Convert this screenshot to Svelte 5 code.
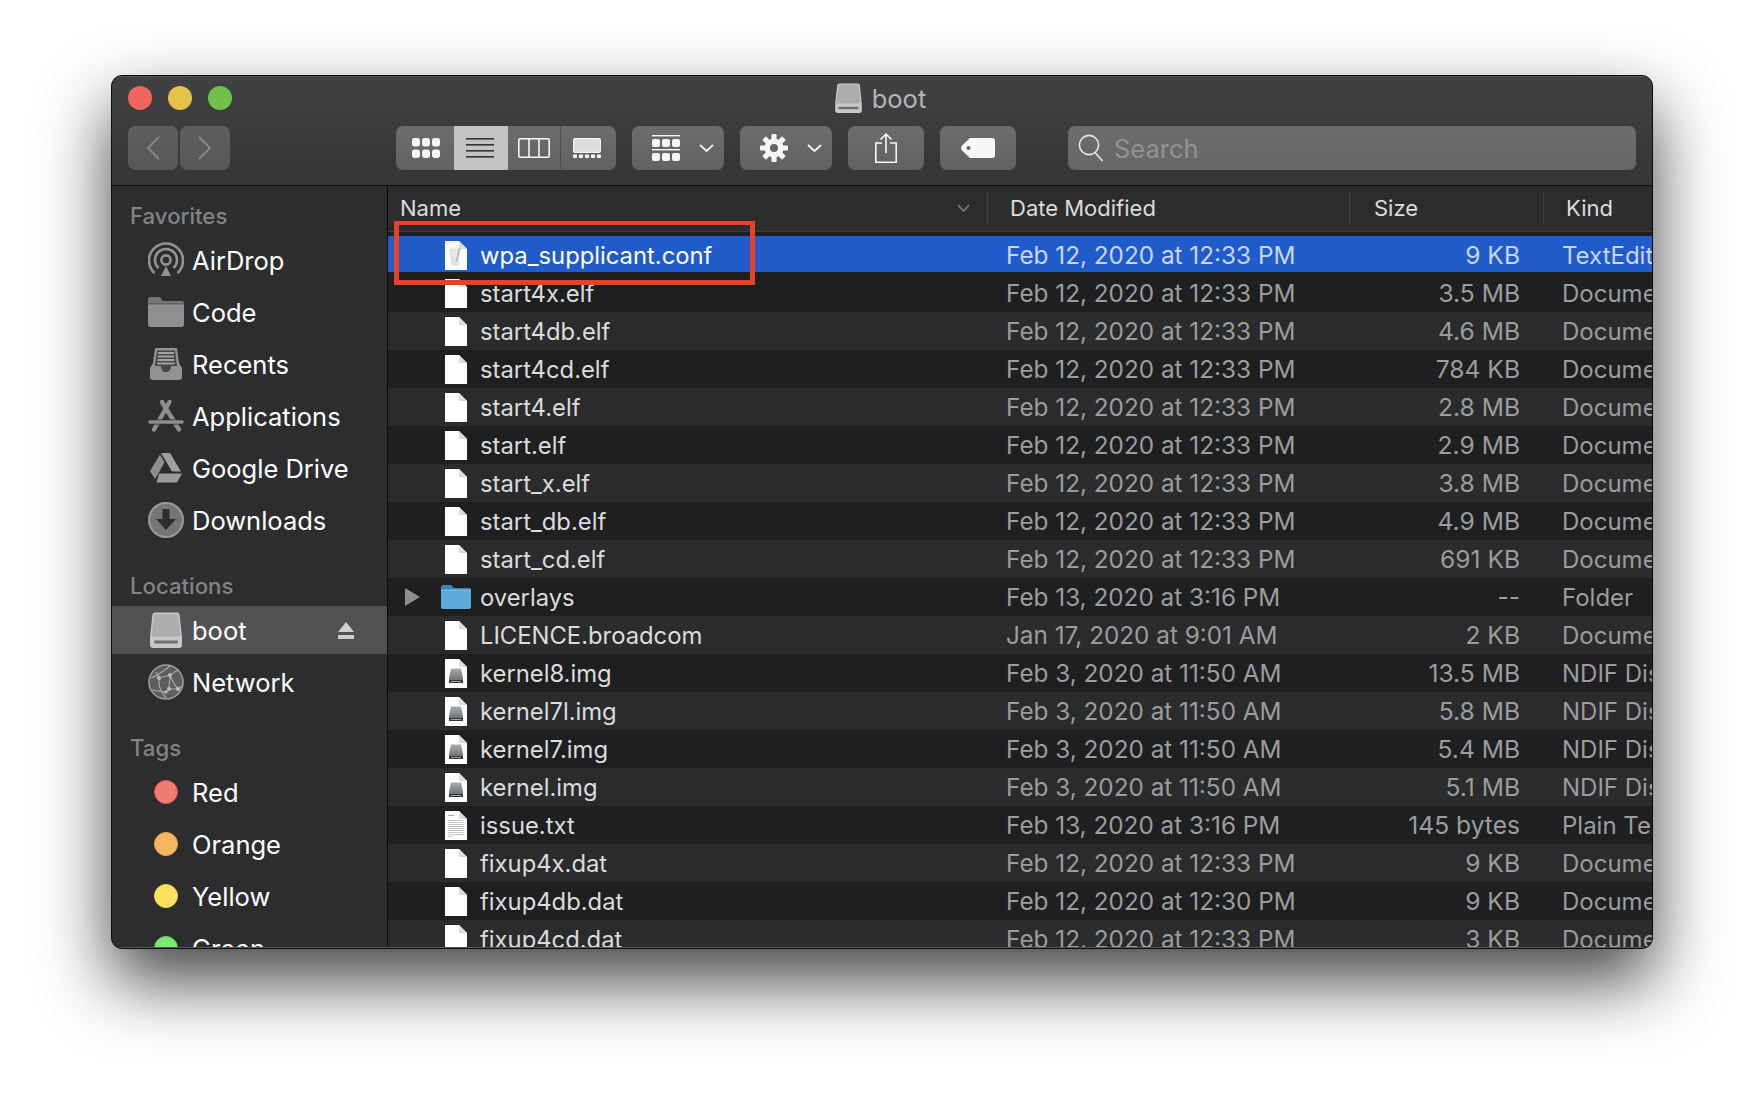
<script>
	const doc = 'Document';
	const disk = 'NDIF Disk Image';
	const feb12 = 'Feb 12, 2020 at 12:33 PM';
	const feb3 = 'Feb 3, 2020 at 11:50 AM';
	const feb13 = 'Feb 13, 2020 at 3:16 PM';

	const files = [
		{ name: 'wpa_supplicant.conf', date: feb12, size: '9 KB', kind: 'TextEdit Document', icon: 'edit', selected: true },
		{ name: 'start4x.elf', date: feb12, size: '3.5 MB', kind: doc, icon: 'file' },
		{ name: 'start4db.elf', date: feb12, size: '4.6 MB', kind: doc, icon: 'file' },
		{ name: 'start4cd.elf', date: feb12, size: '784 KB', kind: doc, icon: 'file' },
		{ name: 'start4.elf', date: feb12, size: '2.8 MB', kind: doc, icon: 'file' },
		{ name: 'start.elf', date: feb12, size: '2.9 MB', kind: doc, icon: 'file' },
		{ name: 'start_x.elf', date: feb12, size: '3.8 MB', kind: doc, icon: 'file' },
		{ name: 'start_db.elf', date: feb12, size: '4.9 MB', kind: doc, icon: 'file' },
		{ name: 'start_cd.elf', date: feb12, size: '691 KB', kind: doc, icon: 'file' },
		{ name: 'overlays', date: feb13, size: '--', kind: 'Folder', icon: 'folder' },
		{ name: 'LICENCE.broadcom', date: 'Jan 17, 2020 at 9:01 AM', size: '2 KB', kind: doc, icon: 'file' },
		{ name: 'kernel8.img', date: feb3, size: '13.5 MB', kind: disk, icon: 'disk' },
		{ name: 'kernel7l.img', date: feb3, size: '5.8 MB', kind: disk, icon: 'disk' },
		{ name: 'kernel7.img', date: feb3, size: '5.4 MB', kind: disk, icon: 'disk' },
		{ name: 'kernel.img', date: feb3, size: '5.1 MB', kind: disk, icon: 'disk' },
		{ name: 'issue.txt', date: feb13, size: '145 bytes', kind: 'Plain Text Document', icon: 'text' },
		{ name: 'fixup4x.dat', date: feb12, size: '9 KB', kind: doc, icon: 'file' },
		{ name: 'fixup4db.dat', date: 'Feb 12, 2020 at 12:30 PM', size: '9 KB', kind: doc, icon: 'file' },
		{ name: 'fixup4cd.dat', date: feb12, size: '3 KB', kind: doc, icon: 'file' }
	];

	const favorites = [
		{ label: 'AirDrop', icon: 'airdrop' },
		{ label: 'Code', icon: 'code' },
		{ label: 'Recents', icon: 'recents' },
		{ label: 'Applications', icon: 'apps' },
		{ label: 'Google Drive', icon: 'drive' },
		{ label: 'Downloads', icon: 'downloads' }
	];

	const tags = [
		{ label: 'Red', fill: '#f17c75', ring: '#e5564d' },
		{ label: 'Orange', fill: '#f5b65f', ring: '#eda43f' },
		{ label: 'Yellow', fill: '#fbe162', ring: '#f5d84a' },
		{ label: 'Green', fill: '#7fe873', ring: '#62d957' }
	];

	const gearTeeth = [0, 45, 90, 135, 180, 225, 270, 315];
	const textLines = [9, 11, 13, 15, 17, 19, 21, 23];
</script>

{#snippet driveIcon()}
	<svg class="drive-icon" width="32" height="36" viewBox="0 0 32 36">
		<path d="M5 0.5H27C28.5 0.5 29.3 1.5 29.6 3L32 25V33C32 34.8 30.8 36 29 36H3C1.2 36 0 34.8 0 33V25L2.4 3C2.7 1.5 3.5 0.5 5 0.5Z" fill="#c8c8c8" />
		<path d="M5.2 2H26.8C27.6 2 28 2.6 28.2 3.4L30.5 24.5H1.5L3.8 3.4C4 2.6 4.4 2 5.2 2Z" fill="#adadad" />
		<rect x="4" y="28.5" width="24" height="3" rx="1" fill="#6f6f70" />
	</svg>
{/snippet}

{#snippet sideIcon(icon)}
	{#if icon === 'airdrop'}
		<svg width="36" height="36" viewBox="0 0 36 36" fill="none" stroke="#939393" stroke-width="2.6">
			<path d="M6.5 31A17 17 0 1 1 29.5 31" />
			<path d="M10.5 26A11 11 0 1 1 25.5 26" />
			<circle cx="18" cy="18" r="4.6" />
			<path d="M18 24L13 34H23Z" fill="#939393" stroke="none" />
		</svg>
	{:else if icon === 'code'}
		<svg width="36" height="30" viewBox="0 0 36 30">
			<path d="M0 3C0 1 1 0 3 0H10C11.5 0 12.3 .6 13 1.5L15 4H34C35.2 4 36 5 36 6V9H0Z" fill="#767677" />
			<path d="M0 7H36V27.5C36 29 35 30 33.5 30H2.5C1 30 0 29 0 27.5Z" fill="#8f8f90" />
			<rect y="6.2" width="36" height="1.2" fill="#5c5c5d" />
		</svg>
	{:else if icon === 'recents'}
		<svg width="32" height="32" viewBox="0 0 32 32">
			<path d="M5 0H27L29 15L32 20V29C32 31 31 32 29 32H3C1 32 0 31 0 29V20L3 15Z" fill="#929293" />
			<path d="M7 2.5H25L27 18H21C21 22 19 24 16 24S11 22 11 18H5Z" fill="#2c2d2f" opacity=".75" />
			<g fill="#a2a2a3">
				<rect x="8" y="4" width="16" height="2" />
				<rect x="8" y="7.5" width="16" height="2" />
				<rect x="7.6" y="11" width="16.8" height="2" />
				<rect x="7.3" y="14.5" width="17.4" height="2" />
			</g>
		</svg>
	{:else if icon === 'apps'}
		<svg width="36" height="32" viewBox="0 0 36 32" fill="none" stroke="#8e8e8f" stroke-linecap="round">
			<path d="M14 2L31 29.5M21.5 2L6 29.5" stroke-width="4.4" />
			<path d="M1.5 22H34.5" stroke="#2c2d2f" stroke-width="5" stroke-linecap="butt" />
			<path d="M2 22H34" stroke-width="3.6" />
		</svg>
	{:else if icon === 'drive'}
		<svg width="32" height="30" viewBox="0 0 32 30" fill="#8f8f90">
			<path d="M11 0H20L31 18.5H22Z" fill="#a0a0a1" />
			<path d="M10 1.5L14.5 9.5L5 26L0 18Z" />
			<path d="M9 20.5H32L27 29.5H6.5Z" fill="#9a9a9b" />
		</svg>
	{:else if icon === 'downloads'}
		<svg width="36" height="36" viewBox="0 0 36 36">
			<circle cx="18" cy="18" r="17" fill="#757576" stroke="#9a9a9b" stroke-width="2" />
			<path d="M14.5 7H21.5V17H28L18 28L8 17H14.5Z" fill="#2c2d2f" />
		</svg>
	{:else if icon === 'boot'}
		{@render driveIcon()}
	{:else if icon === 'network'}
		<svg width="36" height="36" viewBox="0 0 36 36" fill="none" stroke="#a9a9a9">
			<circle cx="18" cy="18" r="17" fill="#5d5d5e" stroke="#9c9c9d" stroke-width="1.6" />
			<path d="M3 14C9 12 15 7 22 2M22 11C25 9 28 7 31 6M11 14L22 11L21 25L30 25L34 22M4 26L18 28L21 25M11 14L8 8M11 14C10 20 13 28 18 34M22 11C24 15 25 20 30 25" stroke-width="1.2" />
			<g fill="#bdbdbd" stroke="none">
				<circle cx="11" cy="14" r="2" />
				<circle cx="22" cy="11" r="2" />
				<circle cx="21" cy="25" r="2" />
				<circle cx="30" cy="25" r="2" />
				<circle cx="18" cy="28" r="1.6" />
			</g>
		</svg>
	{/if}
{/snippet}

{#snippet fileIcon(icon)}
	{#if icon === 'folder'}
		<svg width="30" height="24" viewBox="0 0 30 24">
			<path d="M0 2.5C0 1 1 0 2.5 0H9C10 0 10.8 .5 11.4 1.3L12.8 3H28C29.2 3 30 4 30 5V8H0Z" fill="#3f86b8" />
			<path d="M0 5H30V22C30 23.2 29.2 24 28 24H2C.8 24 0 23.2 0 22Z" fill="#5da9da" />
			<rect y="4.6" width="30" height="1" fill="#8cc6ea" />
		</svg>
	{:else}
		<svg width="22" height="29" viewBox="0 0 22 29">
			<path d="M0 0H14L22 8V29H0Z" fill="#fff" />
			<path d="M14 0L22 8H14Z" fill="#dcdcdc" />
			{#if icon === 'edit'}
				<path d="M5 8H14L13 24H7Z" fill="#e8e8ea" stroke="#d6d6d9" stroke-width=".8" />
				<path d="M6 9L9 22" stroke="#f3d6d6" stroke-width="1" />
				<path d="M15 7L11 21" stroke="#b6b6ba" stroke-width="1.4" />
			{:else if icon === 'disk'}
				<linearGradient id="disk-fill" x1="0" y1="0" x2="0" y2="1">
					<stop offset="0" stop-color="#a7adb0" />
					<stop offset="1" stop-color="#5f6568" />
				</linearGradient>
				<path d="M6 9.5H16L18 19V24H4V19Z" fill="url(#disk-fill)" />
				<rect x="4" y="21" width="14" height="3" fill="#34373a" />
				<rect x="6" y="22" width="10" height="1" fill="#9aa0a3" />
			{:else if icon === 'text'}
				<rect x="3" y="4" width="6" height="1" fill="#a8a8a8" />
				{#each textLines as y}
					<rect x="3" {y} width="16" height=".7" fill="#b0b0b0" />
				{/each}
				<rect x="3" y="25" width="5" height=".7" fill="#b0b0b0" />
			{/if}
		</svg>
	{/if}
{/snippet}

{#snippet chevron()}
	<svg class="chev" width="15" height="8" viewBox="0 0 15 8" fill="none" stroke="#f4f4f4" stroke-width="1.8">
		<path d="M1 1L7.5 7L14 1" />
	</svg>
{/snippet}

<div class="window">
	<header class="titlebar">
		<div class="title-row">
			<div class="lights">
				<span class="light red"></span>
				<span class="light yellow"></span>
				<span class="light green"></span>
			</div>
			<div class="title">
				<span class="title-icon">{@render driveIcon()}</span>
				<span>boot</span>
			</div>
		</div>

		<div class="toolbar">
			<div class="nav">
				<button class="btn nav-btn" aria-label="Back">
					<svg width="14" height="24" viewBox="0 0 14 24" fill="none" stroke="#85868a" stroke-width="2"><path d="M13 1L2 12L13 23" /></svg>
				</button>
				<button class="btn nav-btn" aria-label="Forward">
					<svg width="14" height="24" viewBox="0 0 14 24" fill="none" stroke="#85868a" stroke-width="2"><path d="M1 1L12 12L1 23" /></svg>
				</button>
			</div>

			<div class="views">
				<button class="seg seg-icons" aria-label="Icons">
					<svg width="28" height="20" viewBox="0 0 28 20" fill="#f6f6f6">
						{#each [0, 10, 20] as x}
							<rect {x} y="0" width="8" height="8.4" rx="2.4" />
							<rect {x} y="11.6" width="8" height="8.4" rx="2.4" />
						{/each}
					</svg>
				</button>
				<button class="seg seg-list" aria-label="List">
					<svg width="28" height="20" viewBox="0 0 28 20" fill="#333436">
						<rect y="0" width="28" height="1.6" />
						<rect y="6" width="28" height="1.6" />
						<rect y="12" width="28" height="1.6" />
						<rect y="18" width="28" height="1.6" />
					</svg>
				</button>
				<button class="seg seg-columns" aria-label="Columns">
					<svg width="32" height="20" viewBox="0 0 32 20" fill="none" stroke="#f6f6f6" stroke-width="1.6">
						<rect x=".8" y=".8" width="30.4" height="18.4" rx="1.5" />
						<path d="M11 1V19M21 1V19" />
					</svg>
				</button>
				<button class="seg seg-gallery" aria-label="Gallery">
					<svg width="28" height="20" viewBox="0 0 28 20">
						<rect x=".6" y=".6" width="26.8" height="13.8" rx="1.5" fill="#dddedf" stroke="#f6f6f6" stroke-width="1.2" />
						{#each [0, 6, 12, 18, 24] as x}
							<rect {x} y="16.4" width="4" height="3.6" rx=".8" fill="#f6f6f6" />
						{/each}
					</svg>
				</button>
			</div>

			<button class="btn menu" aria-label="Group">
				<svg width="28" height="26" viewBox="0 0 28 26" fill="#f6f6f6">
					<rect width="28" height="1.4" />
					<rect y="14" width="28" height="1.4" />
					{#each [0, 10, 20] as x}
						<rect {x} y="4" width="8" height="8" rx="2" />
						<rect {x} y="18" width="8" height="8" rx="2" />
					{/each}
				</svg>
				{@render chevron()}
			</button>

			<button class="btn menu" aria-label="Action">
				<svg width="28" height="28" viewBox="-14 -14 28 28" fill="#f6f6f6">
					<circle r="6.8" fill="none" stroke="#f6f6f6" stroke-width="5.6" />
					{#each gearTeeth as deg}
						<rect x="-2.6" y="-14" width="5.2" height="5" rx=".8" transform="rotate({deg})" />
					{/each}
				</svg>
				{@render chevron()}
			</button>

			<button class="btn share" aria-label="Share">
				<svg width="22" height="30" viewBox="0 0 22 30" fill="none" stroke="#f6f6f6" stroke-width="1.6">
					<path d="M7 10H.8V29.2H21.2V10H15" />
					<path d="M11 20V1.5M5.5 6.5L11 1L16.5 6.5" />
				</svg>
			</button>

			<button class="btn tag" aria-label="Tags">
				<svg width="34" height="20" viewBox="0 0 34 20">
					<path d="M9 0H31C32.8 0 34 1.2 34 3V17C34 18.8 32.8 20 31 20H9L1 12.5C-.2 11 -.2 9 1 7.5Z" fill="#f8f8f8" />
					<circle cx="7.5" cy="10" r="2" fill="#66676a" />
				</svg>
			</button>

			<div class="search">
				<svg width="26" height="28" viewBox="0 0 26 28" fill="none" stroke="#e8e8e8" stroke-width="1.6">
					<circle cx="11" cy="11" r="9.6" />
					<path d="M17 18.5L24.5 27" />
				</svg>
				<span class="search-label">Search</span>
			</div>
		</div>
	</header>

	<div class="body">
		<aside class="sidebar">
			<h3 class="first">Favorites</h3>
			{#each favorites as item}
				<div class="side-row">
					<span class="side-icon">{@render sideIcon(item.icon)}</span>
					<span>{item.label}</span>
				</div>
			{/each}

			<h3 class="locations">Locations</h3>
			<div class="side-row active">
				<span class="side-icon">{@render sideIcon('boot')}</span>
				<span>boot</span>
				<svg class="eject" width="16" height="17" viewBox="0 0 16 17" fill="#d0d0d0">
					<path d="M8 0L16 10H0Z" />
					<rect y="13" width="16" height="4" />
				</svg>
			</div>
			<div class="side-row">
				<span class="side-icon">{@render sideIcon('network')}</span>
				<span>Network</span>
			</div>

			<h3 class="tags">Tags</h3>
			{#each tags as tag}
				<div class="side-row">
					<span class="side-icon">
						<span class="dot" style="background:{tag.fill};border-color:{tag.ring}"></span>
					</span>
					<span>{tag.label}</span>
				</div>
			{/each}
		</aside>

		<main class="list">
			<div class="columns">
				<div class="col col-name">Name
					<svg width="13" height="8" viewBox="0 0 13 8" fill="none" stroke="#77787a" stroke-width="1.8"><path d="M1 1L6.5 7L12 1" /></svg>
				</div>
				<div class="col col-date">Date Modified</div>
				<div class="col col-size">Size</div>
				<div class="col col-kind">Kind</div>
			</div>

			<div class="rows">
				{#each files as file}
					<div class="row" class:selected={file.selected}>
						<div class="cell-name">
							<span class="twisty">
								{#if file.icon === 'folder'}
									<svg width="15" height="18" viewBox="0 0 15 18" fill="#8d8e90"><path d="M0 0L15 9L0 18Z" /></svg>
								{/if}
							</span>
							<span class="file-icon">{@render fileIcon(file.icon)}</span>
							<span class="file-name">{file.name}</span>
						</div>
						<div class="cell-date">{file.date}</div>
						<div class="cell-size">{file.size}</div>
						<div class="cell-kind">{file.kind}</div>
					</div>
				{/each}
			</div>

			<div class="callout"></div>
		</main>
	</div>
</div>

<style>
	:global(body) {
		margin: 0;
		background: #fff;
	}

	:global(#app) {
		width: 1764px;
		height: 1096px;
		overflow: hidden;
		padding: 75px 0 0 111px;
		box-sizing: border-box;
	}

	.window {
		width: 1542px;
		height: 874px;
		box-sizing: border-box;
		border: 1px solid #0c0c0d;
		border-radius: 11px;
		overflow: hidden;
		display: flex;
		flex-direction: column;
		box-shadow: 0 32px 70px rgba(0, 0, 0, 0.74);
		font-family: Inter, 'Liberation Sans', sans-serif;
		font-size: 25.5px;
		color: #fff;
		background: #2c2d2f;
	}

	.titlebar {
		height: 110px;
		flex: none;
		box-sizing: border-box;
		border-top: 1px solid #57585a;
		border-bottom: 1px solid #0e0e0f;
		background: linear-gradient(#404143, #343536);
	}

	.title-row {
		height: 44px;
		display: grid;
		grid-template-columns: 1fr;
		align-items: center;
		margin-bottom: 5px;
	}

	.lights {
		display: flex;
		gap: 16px;
		padding-left: 16px;
		grid-area: 1 / 1;
		margin-bottom: 2px;
	}

	.light {
		width: 24px;
		height: 24px;
		border-radius: 50%;
	}
	.red {
		background: #f1655c;
	}
	.yellow {
		background: #e5c14a;
	}
	.green {
		background: #71c04a;
	}

	.title {
		grid-area: 1 / 1;
		justify-self: center;
		display: flex;
		align-items: center;
		gap: 10px;
		padding-right: 3px;
		margin-bottom: 2px;
		color: #b5b6b7;
		font-size: 25.5px;
	}

	.title-icon {
		display: flex;
		height: 30px;
	}
	.title-icon :global(svg) {
		width: 27px;
		height: 30px;
	}

	.toolbar {
		display: flex;
		align-items: stretch;
		height: 44px;
		padding: 0 16px 0 16px;
	}

	button {
		border: 0;
		padding: 0;
		margin: 0;
		display: flex;
		align-items: center;
		justify-content: center;
	}

	.btn {
		background: linear-gradient(#6b6c6d, #616263);
		border-radius: 7px;
	}

	.nav {
		display: flex;
		gap: 2px;
		margin-right: 166px;
	}

	.nav-btn {
		width: 50px;
		background: linear-gradient(#5d5e5f, #565758);
	}

	.views {
		display: flex;
		width: 220px;
		border-radius: 7px;
		overflow: hidden;
		background: linear-gradient(#6b6c6d, #616263);
		margin-right: 16px;
	}

	.seg {
		background: none;
		box-sizing: border-box;
	}
	.seg-icons {
		width: 58px;
		padding-left: 2px;
	}
	.seg-list {
		width: 54px;
		padding-right: 2px;
		background: #c2c3c4;
	}
	.seg-columns {
		width: 53px;
		border-right: 1px solid #4f5051;
	}
	.seg-gallery {
		width: 55px;
		padding-right: 4px;
	}

	.menu {
		width: 92px;
		margin-right: 16px;
		justify-content: flex-start;
		padding-left: 20px;
		box-sizing: border-box;
		gap: 19px;
	}

	.chev {
		flex: none;
	}

	.share {
		width: 76px;
		margin-right: 16px;
	}

	.tag {
		width: 76px;
		margin-right: 52px;
	}

	.search {
		flex: 1;
		display: flex;
		align-items: center;
		gap: 10px;
		padding-left: 10px;
		border-radius: 7px;
		background: linear-gradient(#6b6c6d, #666768);
		color: #929394;
		font-size: 25.5px;
	}

	.body {
		flex: 1;
		min-height: 0;
		display: flex;
		border-bottom: 1px solid #58595b;
	}

	.sidebar {
		width: 275px;
		flex: none;
		border-right: 1px solid #0c0c0d;
		background: #2c2d2f;
		overflow: hidden;
	}

	h3 {
		margin: 0;
		padding-left: 18px;
		font-size: 22.2px;
		font-weight: 500;
		line-height: 26px;
		color: #838485;
	}
	.first {
		margin-top: 17px;
		margin-bottom: 5px;
	}
	.locations {
		margin-top: 27px;
		margin-bottom: 7px;
	}
	.tags {
		margin-top: 27px;
		margin-bottom: 5px;
	}

	.side-row {
		height: 52px;
		display: flex;
		align-items: center;
		padding-left: 36px;
		gap: 8px;
		white-space: nowrap;
	}

	.side-row.active {
		height: 48px;
		background: #515254;
		margin-bottom: 2px;
	}

	.side-icon {
		width: 36px;
		display: flex;
		justify-content: center;
		align-items: center;
		flex: none;
	}

	.dot {
		width: 24px;
		height: 24px;
		box-sizing: border-box;
		border-radius: 50%;
		border: 1.5px solid;
	}

	.eject {
		margin-left: auto;
		margin-right: 33px;
	}

	.list {
		flex: 1;
		min-width: 0;
		position: relative;
		background: #1e1f21;
		overflow: hidden;
	}

	.columns {
		height: 46px;
		box-sizing: border-box;
		display: grid;
		grid-template-columns: 599px 362px 194px 1fr;
		align-items: center;
		border-bottom: 1px solid #3d3e40;
		background: #2b2c2e;
		color: #dcdcdc;
		font-size: 22px;
		margin-bottom: 4px;
	}

	.col {
		height: 34px;
		margin-bottom: 2px;
		display: flex;
		align-items: center;
		box-sizing: border-box;
	}
	.col-name {
		padding: 0 17px 0 12px;
		justify-content: space-between;
	}
	.col-date,
	.col-size,
	.col-kind {
		border-left: 1px solid #3f4042;
		padding-left: 22px;
	}
	.col-size {
		padding-left: 24px;
	}

	.row {
		height: 38px;
		display: grid;
		grid-template-columns: 618px 260px 254px 1fr;
		align-items: center;
		white-space: nowrap;
		color: #9c9d9e;
		font-size: 24px;
	}
	.row:nth-child(even) {
		background: #1e1f21;
	}
	.row:nth-child(odd) {
		background: #2a2b2d;
	}
	.row.selected {
		background: linear-gradient(#205bca 36px, #1e1f21 36px);
		color: #c9d6f3;
	}

	.cell-name {
		display: flex;
		align-items: center;
		padding-left: 17px;
		color: #dcdcdc;
		font-size: 23.8px;
	}
	.row.selected .cell-name {
		color: #fff;
	}

	.twisty {
		width: 15px;
		margin-right: 21px;
		display: flex;
	}
	.file-icon {
		width: 30px;
		margin-right: 9px;
		display: flex;
		justify-content: center;
	}

	.cell-date {
		font-size: 24.3px;
	}
	.cell-size {
		text-align: right;
		font-size: 24.6px;
	}
	.cell-kind {
		padding-left: 42px;
		overflow: hidden;
	}

	.callout {
		position: absolute;
		left: 6px;
		top: 35px;
		width: 361px;
		height: 64px;
		box-sizing: border-box;
		border: solid #e8412a;
		border-width: 4px 5px 5px 5px;
	}
</style>
